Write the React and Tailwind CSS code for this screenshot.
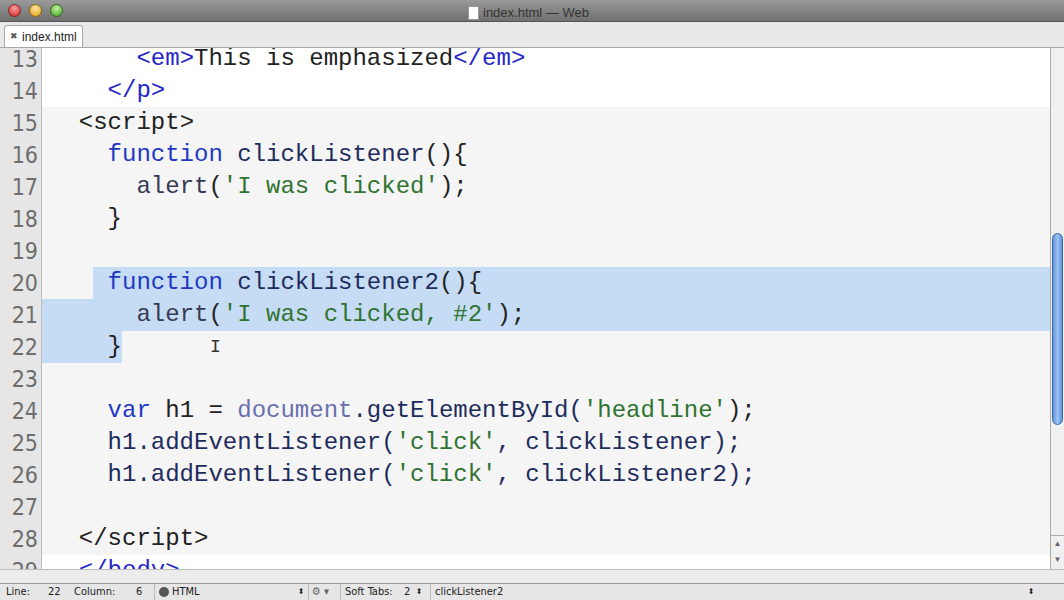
import React from "react";

const K = "text-[#2238c4]";
const F = "text-[#1d2c5c]";
const S = "text-[#2f7430]";
const D = "text-[#6b6fae]";
const T = "text-[#2626c8]";
const P = "text-[#222]";

const LINES = [
  [13, [[6, ""], ["<em>", T], ["This is emphasized", P], ["</em>", T]], "white"],
  [14, [[4, ""], ["</p>", T]], "white"],
  [15, [[2, ""], ["<script>", P]]],
  [16, [[4, ""], ["function", K], [" ", P], ["clickListener", F], ["(){", P]]],
  [17, [[6, ""], ["alert", "text-[#353b52]"], ["(", P], ["'I was clicked'", S], [");", P]]],
  [18, [[4, ""], ["}", P]]],
  [19, []],
  [20, [[4, ""], ["function", K], [" ", P], ["clickListener2", F], ["(){", P]], "selA"],
  [21, [[6, ""], ["alert", "text-[#353b52]"], ["(", P], ["'I was clicked, #2'", S], [");", P]], "selB"],
  [22, [[4, ""], ["}", P]], "selC"],
  [23, []],
  [24, [[4, ""], ["var", K], [" h1 = ", P], ["document", D], [".getElementById(", F], ["'headline'", S], [");", P]]],
  [25, [[4, ""], ["h1.addEventListener(", F], ["'click'", S], [", clickListener);", F]]],
  [26, [[4, ""], ["h1.addEventListener(", F], ["'click'", S], [", clickListener2);", F]]],
  [27, []],
  [28, [[2, ""], ["</script>", P]]],
  [29, [[2, ""], ["</body>", T]], "white"],
];

function Line({ n, parts, kind }) {
  const bg = kind === "white" ? "bg-white" : kind === "selB" ? "bg-[#c6dcf4]" : "bg-[#f5f5f5]";
  return (
    <div className="flex h-[32px]">
      <div className="w-[42px] shrink-0 bg-[#e6e6e6] border-r border-[#bdbdbd] text-right pr-[3px] text-[23px] leading-[32px] text-[#6d6d6d] font-[family-name:DejaVu_Sans_Condensed]">
        {n}
      </div>
      <div className={`relative flex-1 ${bg} pl-[8px] whitespace-pre text-[24px] leading-[32px] font-[family-name:Liberation_Mono]`}>
        {kind === "selA" && <div className="absolute left-[51px] right-0 top-0 bottom-0 bg-[#c6dcf4]" />}
        {kind === "selC" && <div className="absolute left-0 w-[80px] top-0 bottom-0 bg-[#c6dcf4]" />}
        <span className="relative">
          {parts.map(([t, c], i) =>
            typeof t === "number" ? <span key={i}>{" ".repeat(t)}</span> : <span key={i} className={c}>{t}</span>
          )}
        </span>
        {kind === "selC" && <span className="absolute left-[168px] top-0 text-[18px] text-[#333]">I</span>}
      </div>
    </div>
  );
}

export default function App() {
  return (
    <div className="w-[1064px] h-[600px] overflow-hidden flex flex-col bg-[#e8e8e8] font-[family-name:Liberation_Sans]">
      <div className="h-[22px] shrink-0 relative flex items-center bg-gradient-to-b from-[#9a9a9a] to-[#707070] border-b border-[#555]">
        <div className="flex gap-[8px] pl-[8px]">
          <span className="w-[13px] h-[13px] rounded-full bg-[radial-gradient(circle_at_50%_30%,#f7a0a0,#d02020)] border border-[#8a2020]" />
          <span className="w-[13px] h-[13px] rounded-full bg-[radial-gradient(circle_at_50%_30%,#fbe3a0,#e0a010)] border border-[#8a6a10]" />
          <span className="w-[13px] h-[13px] rounded-full bg-[radial-gradient(circle_at_50%_30%,#c0f0a0,#40a020)] border border-[#306a10]" />
        </div>
        <div className="absolute left-[468px] top-[3px] flex items-center gap-[4px] text-[13px] text-[#333]">
          <span className="w-[11px] h-[14px] bg-white border border-[#999] inline-block" />
          index.html — Web
        </div>
      </div>
      <div className="h-[26px] shrink-0 flex items-end pl-[4px] bg-[#e9e9e9] border-b border-[#a8a8a8]">
        <div className="h-[22px] px-[5px] flex items-center gap-[4px] bg-white border border-b-0 border-[#aaa] rounded-t-[3px] text-[12px] text-[#222]">
          <span className="text-[9px] text-[#555]">✖</span>index.html
        </div>
      </div>
      <div className="relative flex-1 overflow-hidden bg-white flex">
        <div className="flex-1 -mt-[5px]">
          {LINES.map(([n, parts, kind]) => <Line key={n} n={n} parts={parts} kind={kind} />)}
        </div>
        <div className="w-[14px] shrink-0 bg-[#f0f0f0] border-l border-[#aaa] relative">
          <div className="absolute left-[1px] right-[1px] top-[185px] h-[192px] rounded-full bg-gradient-to-r from-[#5f93d8] via-[#9cc4f3] to-[#5f93d8] border border-[#3d6aa8]" />
          <div className="absolute bottom-0 left-0 right-0 h-[34px] border-t border-[#aaa] text-[8px] text-[#666] flex flex-col items-center leading-[16px]">
            <span>▲</span><span>▼</span>
          </div>
        </div>
      </div>
      <div className="h-[14px] shrink-0 bg-[#ececec] border-t border-[#bbb]" />
      <div className="h-[17px] shrink-0 flex items-center bg-[#e6e6e6] border-t border-[#999] text-[11px] text-[#222] font-[family-name:DejaVu_Sans_Condensed] whitespace-nowrap">
        <span className="pl-[6px] w-[48px]">Line:</span>
        <span className="w-[26px]">22</span>
        <span className="w-[62px]">Column:</span>
        <span className="w-[18px]">6</span>
        <span className="flex items-center gap-[3px] w-[144px] border-l border-[#bbb] pl-[4px]">
          <span className="w-[10px] h-[10px] rounded-full bg-[#555]" />HTML
        </span>
        <span className="w-[10px] text-[8px]">⬍</span>
        <span className="w-[32px] border-l border-[#bbb] pl-[3px] text-[#666]">⚙ ▾</span>
        <span className="border-l border-[#bbb] pl-[4px] w-[64px]">Soft Tabs:</span>
        <span className="w-[12px]">2</span>
        <span className="w-[14px] text-[8px]">⬍</span>
        <span className="border-l border-[#bbb] pl-[4px] flex-1">clickListener2</span>
        <span className="w-[36px] text-[8px]">⬍</span>
      </div>
    </div>
  );
}
